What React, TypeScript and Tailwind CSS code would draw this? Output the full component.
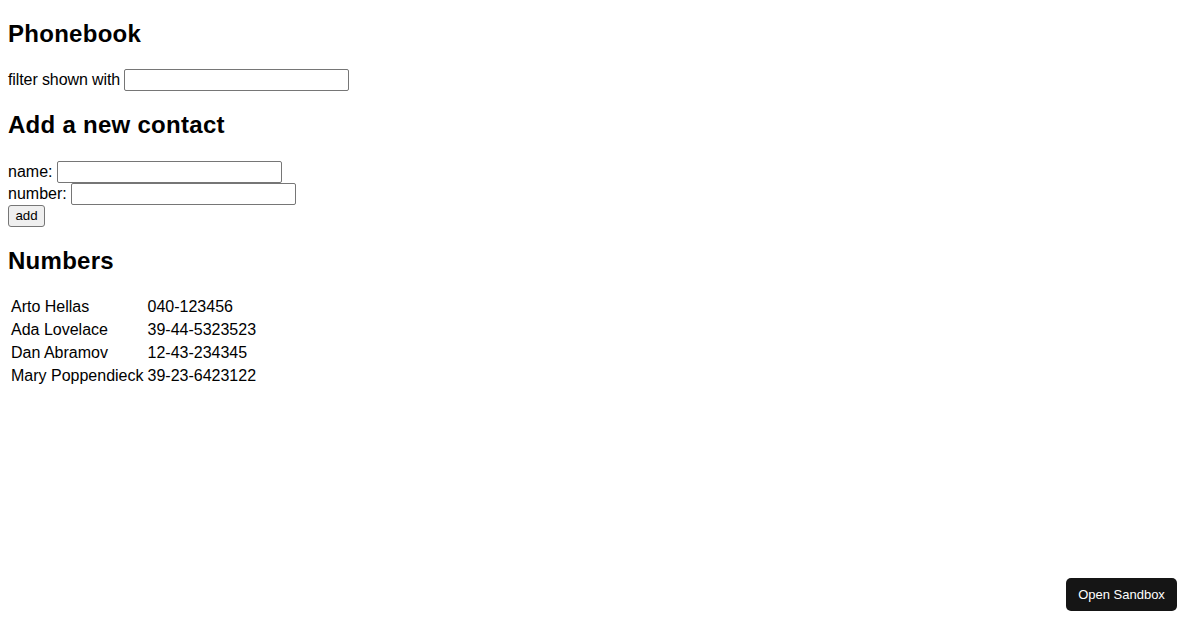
import React from "react";

const persons = [
  { name: "Arto Hellas", number: "040-123456" },
  { name: "Ada Lovelace", number: "39-44-5323523" },
  { name: "Dan Abramov", number: "12-43-234345" },
  { name: "Mary Poppendieck", number: "39-23-6423122" },
];

function Input() {
  return (
    <input
      className="inline-block align-baseline w-[225px] h-[22px] border border-[#767676] rounded-[2px] px-[2px] bg-white text-[13.33px] leading-[1.2] font-['Liberation_Sans',Arial,sans-serif]"
      type="text"
    />
  );
}

export default function App() {
  return (
    <div className="min-h-[630px] bg-white px-2 text-black text-[16px] leading-[1.2] font-['Liberation_Sans',Arial,sans-serif] flow-root">
      <h2 className="text-[24px] font-bold my-[19.92px] leading-[1.2] tracking-[0.28px]">Phonebook</h2>
      <div className="tracking-[-0.1px]">
        filter shown with <Input />
      </div>
      <h2 className="text-[24px] font-bold my-[19.92px] leading-[1.2] tracking-[0.28px]">Add a new contact</h2>
      <form className="pt-[2px]">
        <div>
          name: <Input />
        </div>
        <div>
          number: <Input />
        </div>
        <div>
          <button
            type="submit"
            className="inline-block align-baseline w-[37px] h-[22px] border border-[#767676] rounded-[3px] bg-[#efefef] text-[13.33px] leading-[1.2] font-['Liberation_Sans',Arial,sans-serif] text-black"
          >
            add
          </button>
        </div>
      </form>
      <h2 className="text-[24px] font-bold mt-[19.92px] mb-[17.92px] leading-[1.2] tracking-[0.28px]">Numbers</h2>
      <table className="border-separate border-spacing-[2px]">
        <tbody>
          {persons.map((p) => (
            <tr key={p.name}>
              <td className="p-[1px]">{p.name}</td>
              <td className="p-[1px]">{p.number}</td>
            </tr>
          ))}
        </tbody>
      </table>
      <button className="fixed right-[23px] bottom-[19px] w-[111px] h-[33px] flex items-center justify-center rounded-[5px] bg-[#151515] text-white text-[13px] font-['Liberation_Sans',Arial,sans-serif]">
        Open Sandbox
      </button>
    </div>
  );
}
